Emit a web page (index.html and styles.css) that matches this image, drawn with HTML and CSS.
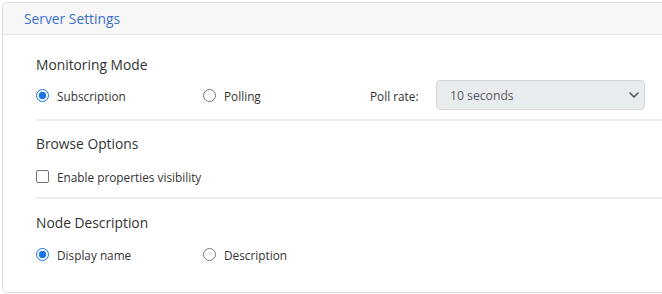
FILE: index.html
```html
<!DOCTYPE html>
<html>
<head>
<meta charset="utf-8">
<link rel="stylesheet" href="styles.css">
</head>
<body>
<div class="card">
  <div class="card-header">Server Settings</div>
  <div class="card-body">
    <div class="section first">
      <div class="section-title">Monitoring Mode</div>
      <div class="row">
        <label class="opt"><input type="radio" name="mode" checked><span>Subscription</span></label>
        <label class="opt"><input type="radio" name="mode"><span>Polling</span></label>
        <div class="poll">
          <span class="poll-label">Poll rate:</span>
          <div class="select">
            <span>10 seconds</span>
            <svg class="chev" width="10" height="6" viewBox="0 0 10 6"><path d="M1 1l4 4 4-4" fill="none" stroke="#555" stroke-width="1.6" stroke-linecap="round" stroke-linejoin="round"/></svg>
          </div>
        </div>
      </div>
    </div>
    <div class="section second">
      <div class="section-title">Browse Options</div>
      <div class="row">
        <label class="opt"><input type="checkbox"><span>Enable properties visibility</span></label>
      </div>
    </div>
    <div class="section last">
      <div class="section-title">Node Description</div>
      <div class="row">
        <label class="opt"><input type="radio" name="desc" checked><span>Display name</span></label>
        <label class="opt"><input type="radio" name="desc"><span>Description</span></label>
      </div>
    </div>
  </div>
</div>
</body>
</html>
```
FILE: styles.css
```css
html, body {
  margin: 0;
  padding: 0;
  background: #ffffff;
  overflow: hidden;
}
body {
  padding: 2px 0 0 2px;
  font-family: "Open Sans", "Noto Sans", sans-serif;
  color: #333333;
}
.card {
  width: 720px;
  border: 1px solid #dcdcdc;
  border-radius: 5px;
  background: #ffffff;
  box-sizing: border-box;
}
.card-header {
  height: 31px;
  line-height: 31px;
  padding-left: 21px;
  background: #f7f7f7;
  border-bottom: 1px solid #e2e2e2;
  border-radius: 5px 5px 0 0;
  color: #3d6fcc;
  font-size: 13.8px;
}
.card-body {
  padding-left: 33px;
}
.section {
  border-bottom: 2px solid #ededed;
}
.section.first { padding-top: 20px; padding-bottom: 9px; }
.section.second { padding-top: 13px; padding-bottom: 6px; }
.section.last {
  border-bottom: none;
  padding-top: 14px;
  padding-bottom: 23px;
}
.section-title {
  height: 20px;
  line-height: 20px;
  font-size: 13.8px;
  color: #333;
}
.row {
  display: flex;
  align-items: center;
  height: 30px;
  margin-top: 5px;
}
.second .row { margin-top: 7px; }
.last .row { margin-top: 6px; }
.opt {
  display: flex;
  align-items: center;
  width: 167px;
  font-size: 11.8px;
  color: #333;
}
.opt span { padding-top: 2px; }
.second .opt { width: auto; }
.opt input {
  appearance: none;
  -webkit-appearance: none;
  margin: 0 8px 0 0;
  width: 13px;
  height: 13px;
  border: 1px solid #767676;
  background: #fff;
  box-sizing: border-box;
  flex: none;
}
.opt input[type="radio"] { border-radius: 50%; }
.opt input[type="radio"]:checked {
  border: 1px solid #1a73e8;
  background: radial-gradient(circle, #1a73e8 0 3.4px, #fff 4px);
}
.opt input[type="checkbox"] { border-radius: 2px; }
.poll {
  display: flex;
  align-items: center;
}
.poll-label {
  font-size: 11.8px;
  width: 66px;
  padding-top: 2px;
}
.select {
  width: 209px;
  height: 30px;
  box-sizing: border-box;
  border: 1px solid #d3d7dc;
  border-radius: 4px;
  background: #e9ecef;
  display: flex;
  align-items: center;
  justify-content: space-between;
  padding: 0 5px 0 13px;
  font-size: 12.2px;
  color: #5a5a5a;
}
.chev { display: block; }
```
